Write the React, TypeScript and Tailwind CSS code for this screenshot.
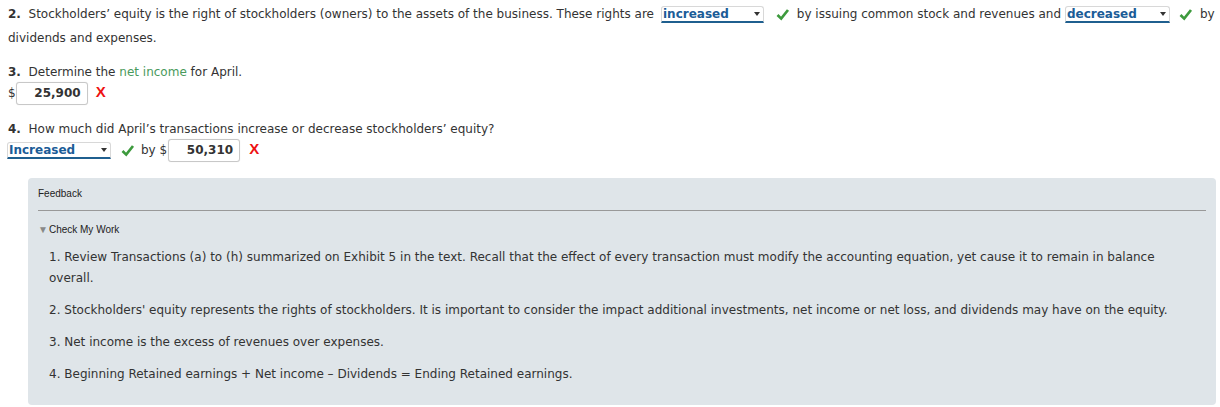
import React from "react";

const Check = () => (
  <svg width="14" height="13" viewBox="0 0 14 13" className="inline-block">
    <path d="M1.5 7 L5.2 10.6 L12 2" fill="none" stroke="#3d9a3d" strokeWidth="2.7" strokeLinecap="butt" strokeLinejoin="miter" />
  </svg>
);

const Cross = () => (
  <span className="font-bold text-[15px] text-[#ee1111] leading-none" style={{ fontFamily: '"Liberation Sans", Arial, sans-serif' }}>X</span>
);

const Select = ({ value, w }: { value: string; w: string }) => (
  <span className={`relative inline-flex items-center h-[17px] ${w} border border-[#d8d8d8] border-b-2 border-b-[#1f5f8f] rounded-t-[3px] align-middle bg-white`}>
    <span className="pl-[1px] font-bold text-[#1b5c97] text-[12px] leading-[14px]">{value}</span>
    <span className="absolute right-[3px] top-[5px] w-0 h-0 border-l-[3.5px] border-r-[3.5px] border-t-[4px] border-l-transparent border-r-transparent border-t-[#333]" />
  </span>
);

const Input = ({ value }: { value: string }) => (
  <span className="inline-flex items-center justify-end w-[72px] h-[23px] border border-[#c8c8c8] rounded-[3px] bg-white pr-[6px] font-bold text-[#333] text-[12px] shadow-[0_0_1px_rgba(0,0,0,0.15)]">
    {value}
  </span>
);

export default function App() {
  return (
    <div className="w-[1220px] h-[407px] bg-white text-[#333] text-[12px] overflow-hidden" style={{ fontFamily: '"DejaVu Sans", Verdana, sans-serif' }}>
      <div className="pl-[8px] pt-[2px] leading-[24px]">
        <span className="font-bold">2.</span>&nbsp; Stockholders’ equity is the right of stockholders (owners) to the assets of the business. These rights are
        <span className="inline-block w-[7px]" />
        <Select value="increased" w="w-[103px]" />
        <span className="inline-block w-[12px]" />
        <Check />
        <span className="inline-block w-[3px]" />
        {"  "}by issuing common stock and revenues and <Select value="decreased" w="w-[105px]" />
        <span className="inline-block w-[9px]" />
        <Check />
        <span className="inline-block w-[7px]" />
        by dividends and expenses.
      </div>

      <div className="pl-[8px] mt-[13px] leading-[18px]">
        <span className="font-bold">3.</span>&nbsp; Determine the <span className="text-[#4a9a5c]">net income</span> for April.
      </div>
      <div className="pl-[8px] mt-[1px] flex items-center h-[22px]">
        <span className="text-[#333]">$</span>
        <Input value="25,900" />
        <span className="ml-[8px]"><Cross /></span>
      </div>

      <div className="pl-[8px] mt-[16px] leading-[18px]">
        <span className="font-bold">4.</span>&nbsp; How much did April’s transactions increase or decrease stockholders’ equity?
      </div>
      <div className="pl-[7px] mt-0 flex items-center h-[24px]">
        <Select value="Increased" w="w-[104px]" />
        <span className="ml-[10px] flex items-center"><Check /></span>
        <span className="ml-[6px]">by $</span>
        <span className="ml-[1px]"><Input value="50,310" /></span>
        <span className="ml-[9px]"><Cross /></span>
      </div>

      <div className="ml-[28px] mr-[4px] mt-[16px] h-[227px] bg-[#dfe5e9] rounded-[4px] px-[10px] pt-[9px]">
        <div className="text-[10px] text-[#222] leading-[14px]" style={{ fontFamily: '"Liberation Sans", Arial, sans-serif' }}>Feedback</div>
        <div className="mt-[9px] border-t border-[#999]" />
        <div className="mt-[12px] flex items-center text-[10px] text-[#222] leading-[14px]" style={{ fontFamily: '"Liberation Sans", Arial, sans-serif' }}>
          <span className="text-[#888] text-[10px] leading-[10px] mr-[1px]">▼</span>Check My Work
        </div>
        <div className="pl-[11px] mt-[10px] max-w-[1146px] text-[12px] text-[#333] leading-[21px]">
          <p>1. Review Transactions (a) to (h) summarized on Exhibit 5 in the text. Recall that the effect of every transaction must modify the accounting equation, yet cause it to remain in balance overall.</p>
          <p className="mt-[11px]">2. Stockholders' equity represents the rights of stockholders. It is important to consider the impact additional investments, net income or net loss, and dividends may have on the equity.</p>
          <p className="mt-[11px]">3. Net income is the excess of revenues over expenses.</p>
          <p className="mt-[11px]">4. Beginning Retained earnings + Net income – Dividends = Ending Retained earnings.</p>
        </div>
      </div>
    </div>
  );
}
